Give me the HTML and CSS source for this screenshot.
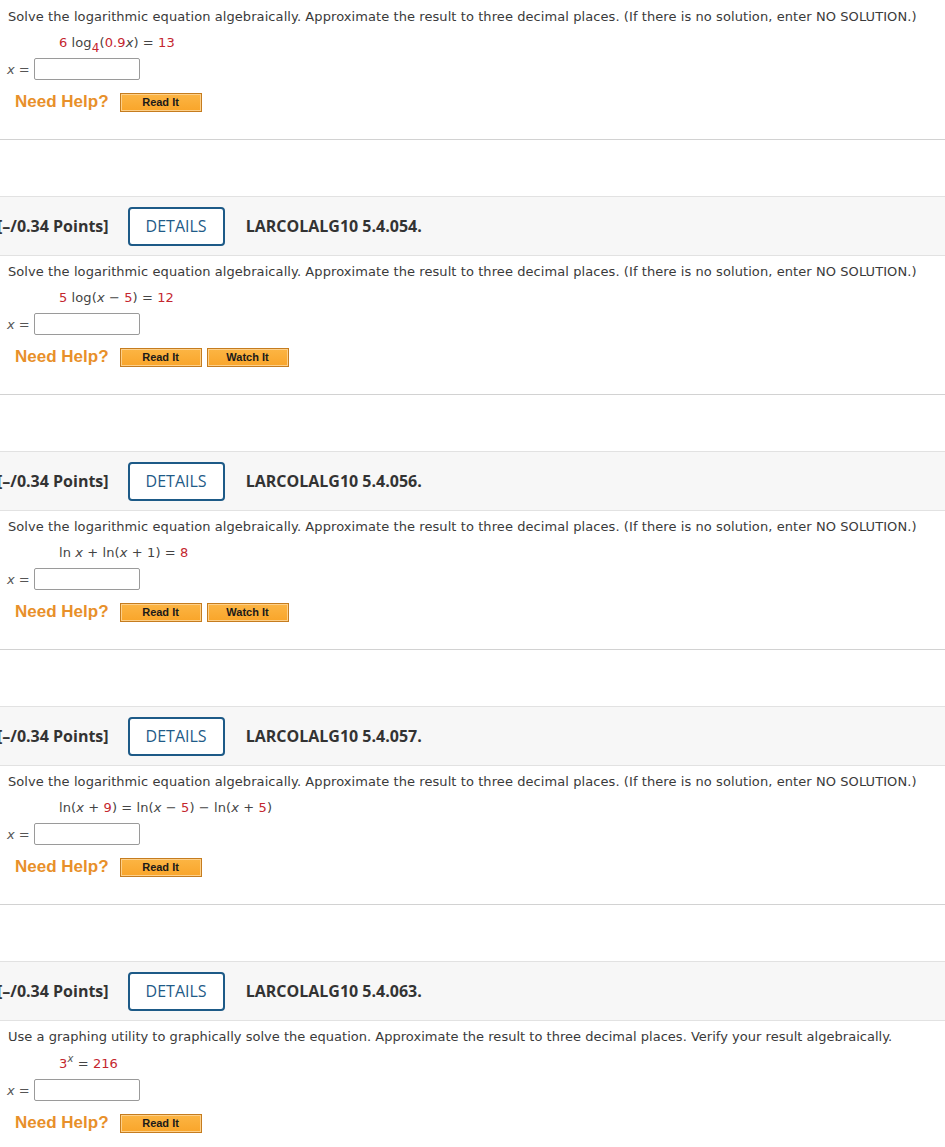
FILE: index.html
```html
<!DOCTYPE html>
<html>
<head>
<meta charset="utf-8">
<link rel="stylesheet" href="styles.css">
</head>
<body>
<div class="q first">
  <div class="body">
    <div class="qtext">Solve the logarithmic equation algebraically. Approximate the result to three decimal places. (If there is no solution, enter NO SOLUTION.)</div>
    <div class="eq"><span class="n">6</span> log<sub class="n">4</sub>(<span class="n">0.9</span><i>x</i>) = <span class="n">13</span></div>
    <div class="answer"><span class="lbl"><i>x</i> =</span><span class="input"></span></div>
    <div class="help"><span class="need">Need Help?</span><span class="btn">Read It</span></div>
  </div>
</div>

<div class="q">
  <div class="qhead"><span class="pts">[–/0.34 Points]</span><span class="details">DETAILS</span><span class="code">LARCOLALG10 5.4.054.</span></div>
  <div class="body">
    <div class="qtext">Solve the logarithmic equation algebraically. Approximate the result to three decimal places. (If there is no solution, enter NO SOLUTION.)</div>
    <div class="eq"><span class="n">5</span> log(<i>x</i> − <span class="n">5</span>) = <span class="n">12</span></div>
    <div class="answer"><span class="lbl"><i>x</i> =</span><span class="input"></span></div>
    <div class="help"><span class="need">Need Help?</span><span class="btn">Read It</span><span class="btn">Watch It</span></div>
  </div>
</div>

<div class="q">
  <div class="qhead"><span class="pts">[–/0.34 Points]</span><span class="details">DETAILS</span><span class="code">LARCOLALG10 5.4.056.</span></div>
  <div class="body">
    <div class="qtext">Solve the logarithmic equation algebraically. Approximate the result to three decimal places. (If there is no solution, enter NO SOLUTION.)</div>
    <div class="eq">ln <i>x</i> + ln(<i>x</i> + 1) = <span class="n">8</span></div>
    <div class="answer"><span class="lbl"><i>x</i> =</span><span class="input"></span></div>
    <div class="help"><span class="need">Need Help?</span><span class="btn">Read It</span><span class="btn">Watch It</span></div>
  </div>
</div>

<div class="q">
  <div class="qhead"><span class="pts">[–/0.34 Points]</span><span class="details">DETAILS</span><span class="code">LARCOLALG10 5.4.057.</span></div>
  <div class="body">
    <div class="qtext">Solve the logarithmic equation algebraically. Approximate the result to three decimal places. (If there is no solution, enter NO SOLUTION.)</div>
    <div class="eq">ln(<i>x</i> + <span class="n">9</span>) = ln(<i>x</i> − <span class="n">5</span>) − ln(<i>x</i> + <span class="n">5</span>)</div>
    <div class="answer"><span class="lbl"><i>x</i> =</span><span class="input"></span></div>
    <div class="help"><span class="need">Need Help?</span><span class="btn">Read It</span></div>
  </div>
</div>

<div class="q last">
  <div class="qhead"><span class="pts">[–/0.34 Points]</span><span class="details">DETAILS</span><span class="code">LARCOLALG10 5.4.063.</span></div>
  <div class="body">
    <div class="qtext qtext-alt">Use a graphing utility to graphically solve the equation. Approximate the result to three decimal places. Verify your result algebraically.</div>
    <div class="eq eq-sup"><span class="n">3</span><sup><i>x</i></sup> = <span class="n">216</span></div>
    <div class="answer"><span class="lbl"><i>x</i> =</span><span class="input"></span></div>
    <div class="help"><span class="need">Need Help?</span><span class="btn">Read It</span></div>
  </div>
</div>
</body>
</html>
```

FILE: styles.css
```css
html, body {
  margin: 0;
  padding: 0;
  background: #fff;
  overflow: hidden;
}
body {
  font-family: "DejaVu Sans", Verdana, sans-serif;
  font-size: 13px;
  color: #3a3a3a;
}
.q + .q {
  margin-top: 56px;
}
.q .body {
  padding: 7px 0 25px 8px;
  border-bottom: 1px solid #d2d2d2;
}
.q.first .body {
  padding-top: 8px;
}
.q.last .body {
  border-bottom: none;
}
.qhead {
  height: 58px;
  background: #f7f7f7;
  border-top: 1px solid #e2e2e2;
  border-bottom: 1px solid #e2e2e2;
  display: flex;
  align-items: center;
  font-family: "Open Sans", sans-serif;
  font-size: 16px;
  color: #333;
}
.pts {
  font-weight: 700;
  margin-left: -3px;
}
.details {
  margin-left: 19px;
  box-sizing: border-box;
  width: 97px;
  height: 39px;
  border: 2px solid #1d5a87;
  border-radius: 4px;
  color: #1f5b88;
  display: flex;
  align-items: center;
  justify-content: center;
  background: #fff;
}
.code {
  margin-left: 21px;
  font-weight: 700;
}
.qtext {
  line-height: 17px;
  letter-spacing: 0.08px;
  white-space: nowrap;
}
.qtext-alt {
  letter-spacing: 0.02px;
}
.eq {
  margin: 10px 0 0 51px;
  line-height: 16px;
  color: #444;
  letter-spacing: 0.1px;
}
.eq-sup {
  margin-top: 11px;
}
.eq i, .lbl i {
  font-style: italic;
}
.n {
  color: #c4262e;
}
sub, sup {
  font-size: 12px;
  line-height: 0;
}
sub {
  vertical-align: -5px;
}
sup {
  vertical-align: 6px;
  font-size: 10px;
  color: #555;
}
.answer {
  margin-top: 7px;
  display: flex;
  align-items: center;
}
.lbl {
  color: #555;
  width: 27px;
  margin-left: -1px;
}
.input {
  display: block;
  box-sizing: border-box;
  width: 106px;
  height: 22px;
  border: 1px solid #9a9a9a;
  border-radius: 2px;
  background: #fff;
}
.help {
  margin-top: 10px;
  height: 24px;
  display: flex;
  align-items: center;
}
.need {
  margin-left: 7px;
  font-family: "Liberation Sans", Arial, sans-serif;
  font-weight: 700;
  font-size: 17px;
  color: #e8902a;
  margin-right: 11px;
}
.btn {
  box-sizing: border-box;
  width: 82px;
  height: 19px;
  margin-right: 5px;
  border: 1px solid #c57c1f;
  box-shadow: inset 0 0 0 1px #fdd08a;
  background: linear-gradient(#fcb544, #f9a52a);
  font-family: "Liberation Sans", Arial, sans-serif;
  font-weight: 700;
  font-size: 11px;
  color: #1a1a1a;
  display: flex;
  align-items: center;
  justify-content: center;
}
```
